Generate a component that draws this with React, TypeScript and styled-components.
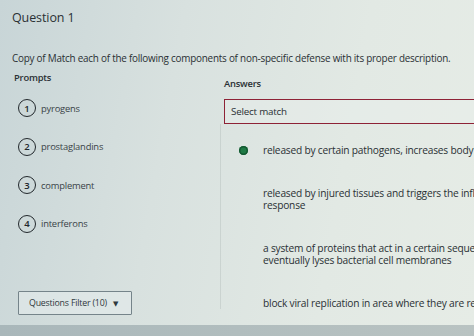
import React from "react";
import styled, { createGlobalStyle } from "styled-components";

const GlobalStyle = createGlobalStyle`
  html, body {
    margin: 0;
    padding: 0;
  }
  body {
    width: 474px;
    height: 336px;
    overflow: hidden;
    font-family: "Open Sans", "DejaVu Sans", sans-serif;
    color: #2b3338;
    background: linear-gradient(100deg, #c8d5d7 0%, #d8e1df 35%, #e2e9e4 70%, #e6ece6 100%);
  }
`;

const Page = styled.div`
  width: 474px;
  height: 336px;
  display: flex;
  flex-direction: column;
  overflow: hidden;
`;

const Body = styled.div`
  flex: 1;
  padding: 9px 0 0 12px;
  display: flex;
  flex-direction: column;
  min-height: 0;
`;

const Title = styled.h1`
  margin: 0;
  font-size: 12.5px;
  font-weight: 400;
  line-height: 18px;
  letter-spacing: -0.1px;
  color: #2a3034;
`;

const Instructions = styled.p`
  margin: 24px 0 0 0;
  font-size: 9.9px;
  line-height: 14px;
  letter-spacing: -0.22px;
  white-space: nowrap;
  color: #2a3034;
`;

const Columns = styled.div`
  display: grid;
  grid-template-columns: 212px 1fr;
  margin-top: 7px;
  flex: 1;
  min-height: 0;
`;

const Column = styled.div<{ $offset?: number }>`
  display: flex;
  flex-direction: column;
  padding-top: ${(p) => p.$offset ?? 0}px;
  min-width: 0;
`;

const Heading = styled.div<{ $indent?: number }>`
  font-size: 9.4px;
  font-weight: 600;
  line-height: 12px;
  letter-spacing: -0.2px;
  padding-left: ${(p) => p.$indent ?? 0}px;
  color: #2a3034;
`;

const PromptList = styled.div`
  display: flex;
  flex-direction: column;
  gap: 18.5px;
  margin-top: 14px;
  padding-left: 6px;
`;

const PromptRow = styled.div`
  display: flex;
  align-items: center;
  gap: 5px;
  height: 20px;
`;

const Badge = styled.span`
  width: 16px;
  height: 16px;
  border: 1.6px solid #22282c;
  border-radius: 50%;
  display: flex;
  align-items: center;
  justify-content: center;
  font-size: 9.5px;
  font-weight: 600;
  color: #22282c;
  flex-shrink: 0;
`;

const PromptText = styled.span`
  font-size: 9.4px;
  letter-spacing: -0.2px;
  color: #3a4348;
`;

const FilterButton = styled.button`
  margin-top: auto;
  margin-bottom: 10px;
  margin-left: 6px;
  width: 114px;
  height: 24px;
  display: flex;
  align-items: center;
  gap: 6px;
  padding: 0 0 0 10px;
  background: rgba(230, 236, 236, 0.55);
  border: 1px solid #75848a;
  border-radius: 1px;
  font-family: "Open Sans", "DejaVu Sans", sans-serif;
  font-size: 8.8px;
  letter-spacing: -0.2px;
  color: #2f383d;
`;

const Caret = styled.span`
  font-size: 7px;
  color: #2f383d;
`;

const Select = styled.div`
  margin-top: 9px;
  height: 25px;
  box-sizing: border-box;
  border: 1.5px solid #8e2236;
  border-right: none;
  display: flex;
  align-items: center;
  padding-left: 6px;
  font-size: 9.8px;
  letter-spacing: -0.2px;
  color: #2a3034;
  background: rgba(236, 241, 238, 0.4);
`;

const AnswerList = styled.div`
  display: flex;
  flex-direction: column;
  gap: 30px;
  padding: 20px 0 0 18px;
  margin-left: -4px;
  border-left: 1px solid rgba(120, 135, 135, 0.18);
`;

const AnswerRow = styled.div`
  display: flex;
  align-items: flex-start;
  gap: 15px;
`;

const Marker = styled.span<{ $active: boolean }>`
  width: 9px;
  height: 9px;
  margin-top: 2px;
  border-radius: 50%;
  flex-shrink: 0;
  background: ${(p) => (p.$active ? "#1f7a45" : "transparent")};
  box-shadow: ${(p) => (p.$active ? "inset 0 0 0 1.5px #145a32" : "none")};
`;

const AnswerText = styled.div`
  font-size: 10.2px;
  line-height: 12.5px;
  letter-spacing: -0.2px;
  color: #2a3034;
  white-space: pre;
`;

const Footer = styled.div`
  height: 11px;
  background: linear-gradient(90deg, #a9b7ba, #b9c3c2);
`;

const prompts = ["pyrogens", "prostaglandins", "complement", "interferons"];

const answers = [
  { text: "released by certain pathogens, increases body temperature", active: true },
  { text: "released by injured tissues and triggers the inflammatory\nresponse", active: false },
  { text: "a system of proteins that act in a certain sequence and\neventually lyses bacterial cell membranes", active: false },
  { text: "block viral replication in area where they are released", active: false },
];

export default function App() {
  return (
    <Page>
      <GlobalStyle />
      <Body>
        <Title>Question 1</Title>
        <Instructions>
          Copy of Match each of the following components of non-specific defense with its proper description.
        </Instructions>
        <Columns>
          <Column>
            <Heading $indent={2}>Prompts</Heading>
            <PromptList>
              {prompts.map((p, i) => (
                <PromptRow key={p}>
                  <Badge>{i + 1}</Badge>
                  <PromptText>{p}</PromptText>
                </PromptRow>
              ))}
            </PromptList>
            <FilterButton>
              Questions Filter (10) <Caret>▼</Caret>
            </FilterButton>
          </Column>
          <Column $offset={6}>
            <Heading>Answers</Heading>
            <Select>Select match</Select>
            <AnswerList>
              {answers.map((a) => (
                <AnswerRow key={a.text}>
                  <Marker $active={a.active} />
                  <AnswerText>{a.text}</AnswerText>
                </AnswerRow>
              ))}
            </AnswerList>
          </Column>
        </Columns>
      </Body>
      <Footer />
    </Page>
  );
}
